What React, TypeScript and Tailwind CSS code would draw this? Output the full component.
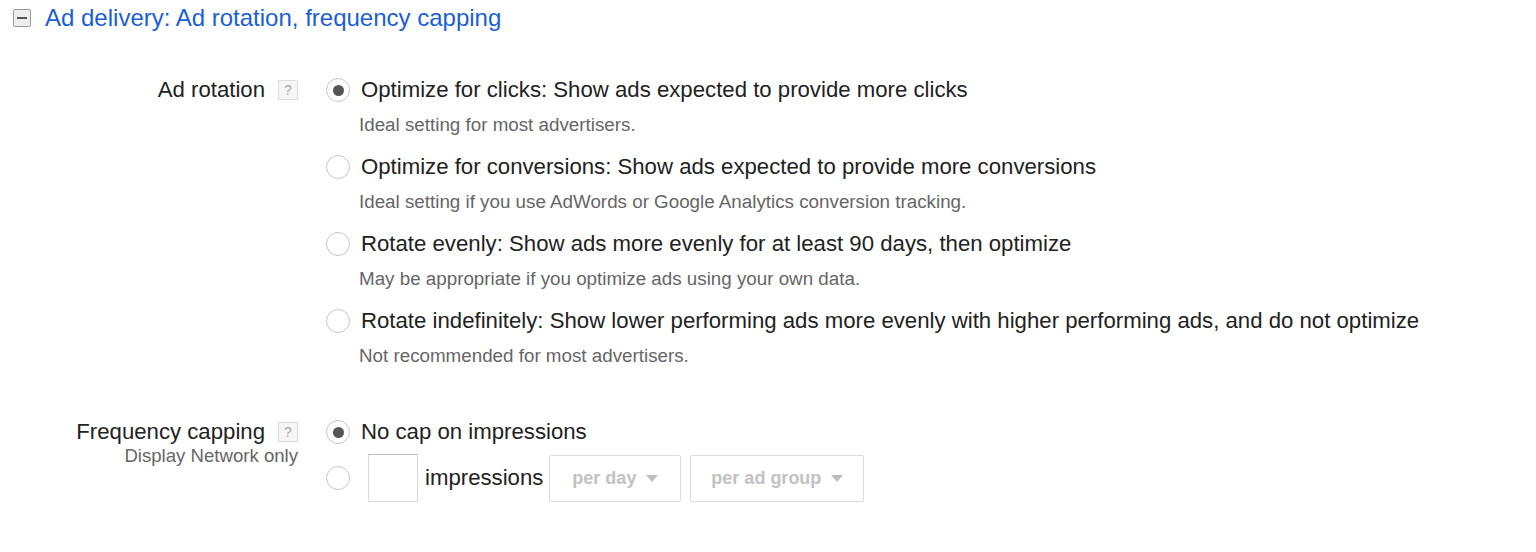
import React from 'react'

const font = { fontFamily: '"Liberation Sans", Arial, Helvetica, sans-serif' }

function HelpIcon() {
  return (
    <span className="inline-flex h-[20px] w-[20px] items-center justify-center border border-[#dcdcdc] bg-[#f6f6f6] text-[14px] leading-none text-[#a8a8a8]">
      ?
    </span>
  )
}

function Radio({ checked = false }: { checked?: boolean }) {
  return (
    <span className="inline-flex h-[24px] w-[24px] shrink-0 items-center justify-center rounded-full border-[1.5px] border-[#c6c6c6] bg-white">
      {checked && <span className="h-[11px] w-[11px] rounded-full bg-[#555555]" />}
    </span>
  )
}

function Caret() {
  return (
    <svg width="12" height="7" viewBox="0 0 12 7" className="ml-[10px]">
      <path d="M0 0 H12 L6 7 Z" fill="#bdbdbd" />
    </svg>
  )
}

function Dropdown({ label, width }: { label: string; width: string }) {
  return (
    <div
      className={`flex h-[47px] ${width} items-center justify-center rounded-[2px] border border-[#dcdcdc] bg-white text-[18px] font-bold text-[#c2c2c2]`}
    >
      {label}
      <Caret />
    </div>
  )
}

const rotationOptions = [
  {
    title: 'Optimize for clicks: Show ads expected to provide more clicks',
    note: 'Ideal setting for most advertisers.',
    checked: true,
  },
  {
    title: 'Optimize for conversions: Show ads expected to provide more conversions',
    note: 'Ideal setting if you use AdWords or Google Analytics conversion tracking.',
  },
  {
    title: 'Rotate evenly: Show ads more evenly for at least 90 days, then optimize',
    note: 'May be appropriate if you optimize ads using your own data.',
  },
  {
    title:
      'Rotate indefinitely: Show lower performing ads more evenly with higher performing ads, and do not optimize',
    note: 'Not recommended for most advertisers.',
  },
]

export default function App() {
  return (
    <div className="min-h-[552px] w-full bg-white pt-1 text-[#222222]" style={font}>
      {/* section header */}
      <div className="flex h-7 items-center pl-[13px]">
        <span className="flex h-[18px] w-[18px] items-center justify-center rounded-[2px] border-[1.5px] border-[#9a9a9a] bg-[#ededed]">
          <span className="h-[2px] w-[10px] bg-[#555555]" />
        </span>
        <span className="ml-[14px] text-[24px] leading-7 text-[#1a5fd4]">
          Ad delivery: Ad rotation, frequency capping
        </span>
      </div>

      <div className="mt-[44px] grid grid-cols-[298px_1fr] gap-x-[28px] gap-y-[50px]">
        {/* Ad rotation */}
        <div className="flex h-7 items-center justify-end gap-[13px]">
          <span className="text-[22.2px] leading-7">Ad rotation</span>
          <HelpIcon />
        </div>
        <div className="flex flex-col gap-y-[16px]">
          {rotationOptions.map((o) => (
            <div key={o.title}>
              <div className="flex h-7 items-center gap-[11px]">
                <Radio checked={o.checked} />
                <span className="whitespace-nowrap text-[22.2px] leading-7">{o.title}</span>
              </div>
              <div className="mt-[9px] pl-[33px] text-[18.8px] leading-6 text-[#666666]">
                {o.note}
              </div>
            </div>
          ))}
        </div>

        {/* Frequency capping */}
        <div className="flex flex-col items-end">
          <div className="flex h-7 items-center gap-[13px]">
            <span className="text-[22.2px] leading-7">Frequency capping</span>
            <HelpIcon />
          </div>
          <span className="text-[18.6px] leading-5 text-[#666666]">Display Network only</span>
        </div>
        <div className="flex flex-col gap-y-[8px]">
          <div className="flex h-7 items-center gap-[11px]">
            <Radio checked />
            <span className="text-[22.2px] leading-7">No cap on impressions</span>
          </div>
          <div className="flex h-[48px] items-center">
            <Radio />
            <div className="ml-[18px] h-[48px] w-[50px] border border-[#dadada] border-t-[#bdbdbd] bg-white" />
            <span className="ml-[7px] text-[22.2px] leading-7">impressions</span>
            <div className="ml-[6px] flex gap-[9px]">
              <Dropdown label="per day" width="w-[132px]" />
              <Dropdown label="per ad group" width="w-[174px]" />
            </div>
          </div>
        </div>
      </div>
    </div>
  )
}
